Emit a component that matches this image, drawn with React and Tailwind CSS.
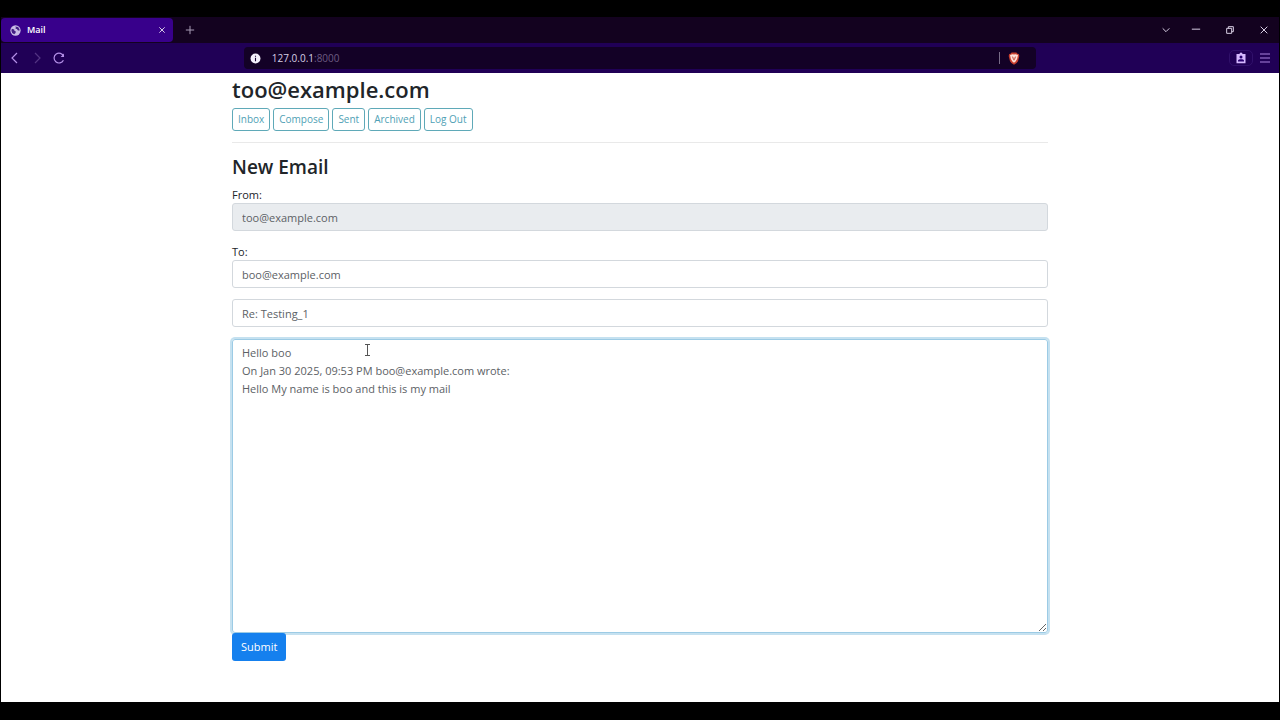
import React from "react";

const navItems = ["Inbox", "Compose", "Sent", "Archived", "Log Out"];

const message = `Hello boo
On Jan 30 2025, 09:53 PM boo@example.com wrote:
Hello My name is boo and this is my mail`;

function GlobeIcon() {
  return (
    <svg viewBox="0 0 12 12" className="size-[11px]" aria-hidden="true">
      <circle cx="6" cy="6" r="5.6" fill="#c9bce6" />
      <path d="M2 4.2 4.6 5 4.8 6.4 6.4 7.2 6 8.8 4.6 10.2 2.4 8.8 1.5 6.400Z" fill="#452085" />
      <path d="M5.6 1.6 8.8 2.200 10.4 4.6 10.2 6.4 8.4 5.8 7.6 4.4 6 4 6.4 2.800Z" fill="#452085" />
    </svg>
  );
}

function StrokeIcon({ d, className }) {
  return (
    <svg viewBox="0 0 12 12" className={className} fill="none" stroke="currentColor" strokeWidth="1.2" aria-hidden="true">
      <path d={d} />
    </svg>
  );
}

function ReloadIcon() {
  return (
    <svg viewBox="0 0 12 12" className="size-3" fill="none" stroke="currentColor" strokeWidth="1.2" aria-hidden="true">
      <path d="M10.6 4.4A4.9 4.9 0 1 0 10.4 8.2" />
      <path d="M11 1.6V5H7.6Z" fill="currentColor" stroke="none" />
    </svg>
  );
}

function InfoIcon() {
  return (
    <svg viewBox="0 0 12 12" className="size-[11px]" aria-hidden="true">
      <circle cx="6" cy="6" r="5.4" fill="#f4f0fb" />
      <path d="M5.4 3h1.2v1.200H5.400zM5.400 5.200h1.200v3.800H5.400z" fill="#16022f" />
    </svg>
  );
}

function ShieldIcon() {
  return (
    <svg viewBox="0 0 12 13" className="h-[13px] w-3" aria-hidden="true">
      <path d="M3.6.6h4.8l1 1.1 1.4.4.5 1.8L10 9.2 8.6 11 6 12.7 3.4 11 2 9.2.7 3.9l.5-1.8 1.400-.4Z" fill="#c9402f" />
      <path d="M2 3 4.500 2.200 6 2.600l1.500-.4 2.500.8-.9 4L7.600 9.600 6 10.800 4.400 9.600 2.900 7Z" fill="#ffe1d8" />
      <path d="M3.800 4.200 5.300 5 6 7.200 6.700 5 8.200 4.200 7.200 7 6 8.800 4.800 7Z" fill="#c96052" />
    </svg>
  );
}

function BadgeIcon() {
  return (
    <svg viewBox="0 0 12 12" className="size-3" aria-hidden="true">
      <path d="M1.5 2h3a1.5 1.5 0 0 1 3 0h3v9.2h-9Z" fill="#d5b8ff" />
      <circle cx="6" cy="4.9" r="1.5" fill="#280070" />
      <path d="M3 9.6V8.7C3 7.6 4.6 7.2 6 7.2s3 .4 3 1.5v.9Z" fill="#280070" />
    </svg>
  );
}

function TextCursor() {
  return (
    <svg viewBox="0 0 7 12" className="pointer-events-none absolute left-[132px] top-[5px] h-3 w-[7px]" fill="none" stroke="#555" aria-hidden="true">
      <path d="M1 .5h5M3.500 1v10M1 11.500h5" />
    </svg>
  );
}

function Browser() {
  return (
    <header>
      <div className="flex h-[26px] items-center justify-between bg-[#13021f]">
        <div className="flex h-full items-center gap-3">
          <div className="flex h-6 w-[172px] items-center gap-[6px] rounded-[4px] bg-[#38008b] pl-[9px] pr-[6px] text-white">
            <GlobeIcon />
            <span className="flex-1 text-[9px] font-semibold">Mail</span>
            <button aria-label="Close tab" className="p-px">
              <StrokeIcon className="size-2" d="m2 2 8 8M10 2 2 10" />
            </button>
          </div>
          <button aria-label="New tab" className="text-[#a79bb5]">
            <StrokeIcon className="size-[10px]" d="M6 1v10M1 6h10" />
          </button>
        </div>
        <div className="flex items-center gap-6 pr-[10px] text-[#d6cde2]">
          <button aria-label="Search tabs" className="-mr-1"><StrokeIcon className="size-[10px]" d="m2 4 4 4 4-4" /></button>
          <button aria-label="Minimize"><StrokeIcon className="size-[10px]" d="M1 5h10" /></button>
          <button aria-label="Restore"><StrokeIcon className="size-[10px]" d="M2 4h6v6H2zM4 4V2h6v6H8" /></button>
          <button aria-label="Close window"><StrokeIcon className="size-[10px]" d="m2 2 8 8M10 2 2 10" /></button>
        </div>
      </div>
      <div className="flex h-[30px] items-center bg-[#200056]">
        <div className="flex flex-1 items-center gap-[10px] pl-2 text-[#b590e8]">
          <button aria-label="Back"><StrokeIcon className="size-3" d="M8 1 3 6l5 5" /></button>
          <button aria-label="Forward" className="text-[#533483]"><StrokeIcon className="size-3" d="m4 1 5 5-5 5" /></button>
          <button aria-label="Reload"><ReloadIcon /></button>
        </div>
        <div className="flex h-[22px] w-[62%] items-center rounded-[4px] bg-[#130126] pl-[6px] pr-4">
          <InfoIcon />
          <span className="flex-1 pl-[11px] text-[10px] text-[#d7cfe5]">
            127.0.0.1<span className="text-[#6d5c82]">:8000</span>
          </span>
          <span className="mr-2 h-3 w-px bg-[#776b86]" />
          <button aria-label="Shields"><ShieldIcon /></button>
        </div>
        <div className="flex flex-1 items-center justify-end gap-[6px] pr-2 text-[#a984dd]">
          <button aria-label="Profile" className="rounded-[5px] border border-[#30106a] px-[5px] py-px"><BadgeIcon /></button>
          <button aria-label="Menu"><StrokeIcon className="size-3" d="M1 2h10M1 6h10M1 10h10" /></button>
        </div>
      </div>
    </header>
  );
}

const field = "block h-7 w-full rounded-[3px] border border-[#d3d8dd] px-[9px] text-[11px] text-[#5c6165] outline-none";

export default function App() {
  return (
    <div className="flex min-h-screen flex-col bg-black px-px pt-[17px] pb-[18px] font-['Open_Sans','Noto_Sans',sans-serif] text-[11px] text-[#212529]">
      <Browser />
      <main className="flex-1 bg-white">
        <div className="mx-auto w-full max-w-[816px] pt-px">
          <h2 className="text-[22px] leading-[30px] font-semibold">too@example.com</h2>
          <nav className="mt-1 flex gap-[3px]">
            {navItems.map((name) => (
              <button key={name} className="h-[23px] rounded-[3px] border border-[#5fa9b8] px-[5px] text-[10px] text-[#4f9fb5]">
                {name}
              </button>
            ))}
          </nav>
          <hr className="mt-[11px] border-[#e9e9e9]" />
          <h3 className="mt-3 text-[19px] leading-6 font-semibold">New Email</h3>
          <form onSubmit={(e) => e.preventDefault()}>
            <div className="mt-2 mb-3">
              <label htmlFor="from" className="block leading-4">From:</label>
              <input id="from" disabled defaultValue="too@example.com" className={`${field} bg-[#e9ecef]`} />
            </div>
            <div className="mt-[13px] mb-[11px]">
              <label htmlFor="to" className="block leading-4">To:</label>
              <input id="to" defaultValue="boo@example.com" className={field} />
            </div>
            <input aria-label="Subject" defaultValue="Re: Testing_1" className={field} />
            <div className="relative mt-3">
              <textarea
                aria-label="Body"
                spellCheck={false}
                defaultValue={message}
                className="block h-[294px] w-full resize-y rounded-[3px] border border-[#9ccbe5] px-[9px] py-1 leading-[18px] text-[#5c6165] shadow-[0_0_0_2px_#c5e1f0] outline-none"
              />
              <TextCursor />
            </div>
            <button type="submit" className="relative block h-7 rounded-[3px] bg-[#1580ee] px-[9px] text-[11px] text-white">
              Submit
            </button>
          </form>
        </div>
      </main>
    </div>
  );
}
